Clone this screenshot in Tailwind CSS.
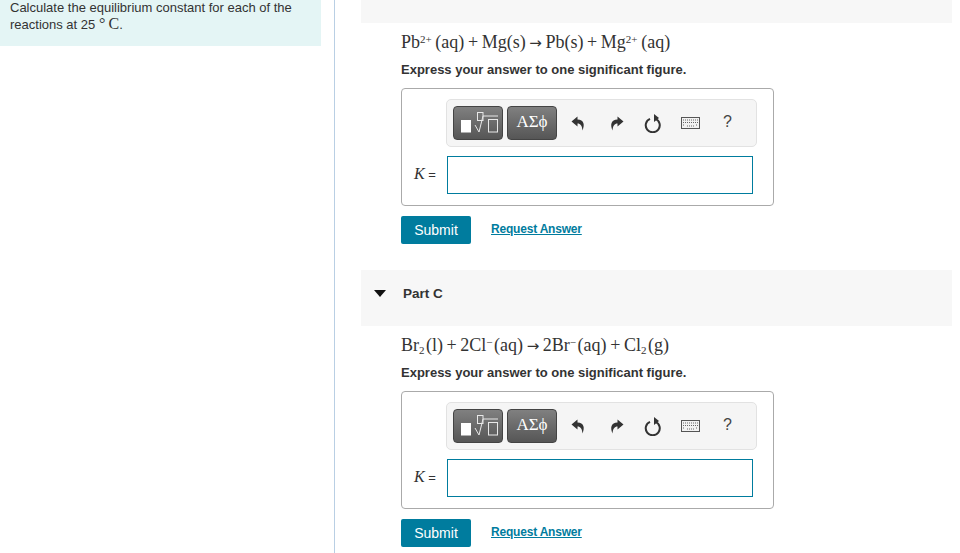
<!DOCTYPE html>
<html lang="en">
<head>
<meta charset="UTF-8">
<title>Part C</title>
<script src="https://cdn.jsdelivr.net/npm/@tailwindcss/browser@4"></script>
</head>
<body class="bg-white font-['Liberation_Sans',Arial,sans-serif] text-[#333] overflow-hidden">
<div class="flex h-[553px] overflow-hidden">
  <div class="w-[335px] shrink-0 border-r border-[#b9cfe4] pr-[13px]">
    <div class="h-[46px] bg-[#e4f5f5] pl-[10px] pr-2 text-[13px] leading-[16px] text-[#333]">
      <p class="w-[290px]">Calculate the equilibrium constant for each of the reactions at 25 <span class="font-['Liberation_Serif',serif] text-[16px] leading-none">°&#8201;C</span>.</p>
    </div>
  </div>
  <div class="w-[591px] ml-[26px] shrink-0">
    <div class="h-[23px] bg-[#f7f7f7]"></div>

    <div class="h-[247px] pl-10">
      <p class="h-[39px] pt-[8px] font-['Liberation_Serif',serif] text-[18px] leading-[22px] text-[#333] whitespace-nowrap">Pb<sup class="text-[11px] leading-none">2+</sup>&#8201;(aq)&#8201;+&#8201;Mg(s)&#8201;<span class="font-['DejaVu_Sans',sans-serif] text-[15px]">→</span>&#8201;Pb(s)&#8201;+&#8201;Mg<sup class="text-[11px] leading-none">2+</sup>&#8201;(aq)</p>
      <p class="h-[26px] text-[13px] leading-[16px] font-bold text-[#333]">Express your answer to one significant figure.</p>
      <div class="w-[373px] h-[118px] border border-[#aaa] rounded-[4px] pt-[10px] pl-[44px]">
        <div class="w-[311px] h-[48px] bg-[#f5f5f5] border border-[#e2e2e2] rounded-[5px] flex items-center pl-[6px]">
          <div class="w-[50px] h-[34px] rounded-[4px] border border-[#444] bg-gradient-to-b from-[#808080] to-[#565656]">
            <svg width="48" height="32" viewBox="0 0 48 32" fill="none" stroke="#e8e8e8" stroke-width="1"><rect x="7" y="13" width="10" height="12.500" fill="#fff" stroke="none" /><rect x="23.500" y="5.500" width="5.500" height="8" /><path d="M21 18l4 7 4-16h15" /><rect x="34.500" y="12.500" width="9" height="12.500" /></svg>
          </div>
          <div class="w-[50px] h-[34px] ml-[4px] rounded-[4px] border border-[#444] bg-gradient-to-b from-[#808080] to-[#565656] flex items-center justify-center font-['Liberation_Serif',serif] text-[17px] text-white"><span class="-mt-[2px]">ΑΣϕ</span></div>
          <svg class="ml-[14px]" width="14" height="15" viewBox="0 0 14 15" fill="#333"><path d="M6.500 0.500L0.500 5.500l6 5V7.500c3 0 4.500 2 5 7 2.500-6 1.500-10.500-5-11z" /></svg>
          <svg class="ml-[25px]" width="14" height="15" viewBox="0 0 14 15" fill="#333"><path d="M7.500 0.500l6 5-6 5V7.500c-3 0-4.500 2-5 7-2.500-6-1.500-10.500 5-11z" /></svg>
          <svg class="ml-[20px]" width="18" height="19" viewBox="0 0 18 19" fill="none" stroke="#333" stroke-width="2"><path d="M6 4.800a7 7 0 1 0 5.500 0" /><path d="M10 0l0 8 5-4z" fill="#333" stroke="none" /></svg>
          <svg class="ml-[19px]" width="19" height="12" viewBox="0 0 19 12" fill="#f2f2f2" stroke="#555" stroke-width="1"><rect x="0.500" y="0.500" width="18" height="11" /><path d="M2 3h15M2 5.500h15M2 8h2M6 9h7M15 8h2" stroke="#666" stroke-dasharray="1 1" /></svg>
          <span class="ml-[23px] -mt-[2px] text-[16px] text-[#444]">?</span>
        </div>
        <div class="flex items-center mt-[9px] -ml-[32px]">
          <span class="w-[33px] -mt-[2px] text-[13px] text-[#333] whitespace-nowrap"><i class="font-['Liberation_Serif',serif] text-[16px]">K</i> =</span>
          <div class="w-[306px] h-[38px] border border-[#007c9e] bg-white"></div>
        </div>
      </div>
      <div class="flex items-center mt-[10px]">
        <button class="w-[70px] h-[28px] bg-[#007c9e] rounded-[2px] text-white text-[14px]">Submit</button>
        <a class="ml-5 -mt-[3px] text-[12px] tracking-[-0.2px] font-bold text-[#007c9e] underline">Request Answer</a>
      </div>
    </div>

    <div class="h-[56px] bg-[#f7f7f7] flex items-start pl-[13px] pt-[15px]">
      <svg class="mt-[5px]" width="12" height="7" viewBox="0 0 12 7" fill="#111"><path d="M0 0h12L6 7z" /></svg>
      <span class="ml-[17px] text-[13.500px] leading-[18px] font-bold text-[#333]">Part C</span>
    </div>

    <div class="pl-10">
      <p class="h-[39px] pt-[8px] font-['Liberation_Serif',serif] text-[18px] leading-[22px] text-[#333] whitespace-nowrap">Br<sub class="text-[11px] leading-none">2</sub>&#8202;(l)&#8201;+&#8201;2Cl<sup class="text-[11px] leading-none">−</sup>&#8202;(aq)&#8201;<span class="font-['DejaVu_Sans',sans-serif] text-[15px]">→</span>&#8201;2Br<sup class="text-[11px] leading-none">−</sup>&#8202;(aq)&#8201;+&#8201;Cl<sub class="text-[11px] leading-none">2</sub>&#8202;(g)</p>
      <p class="h-[26px] text-[13px] leading-[16px] font-bold text-[#333]">Express your answer to one significant figure.</p>
      <div class="w-[373px] h-[118px] border border-[#aaa] rounded-[4px] pt-[10px] pl-[44px]">
        <div class="w-[311px] h-[48px] bg-[#f5f5f5] border border-[#e2e2e2] rounded-[5px] flex items-center pl-[6px]">
          <div class="w-[50px] h-[34px] rounded-[4px] border border-[#444] bg-gradient-to-b from-[#808080] to-[#565656]">
            <svg width="48" height="32" viewBox="0 0 48 32" fill="none" stroke="#e8e8e8" stroke-width="1"><rect x="7" y="13" width="10" height="12.500" fill="#fff" stroke="none" /><rect x="23.500" y="5.500" width="5.500" height="8" /><path d="M21 18l4 7 4-16h15" /><rect x="34.500" y="12.500" width="9" height="12.500" /></svg>
          </div>
          <div class="w-[50px] h-[34px] ml-[4px] rounded-[4px] border border-[#444] bg-gradient-to-b from-[#808080] to-[#565656] flex items-center justify-center font-['Liberation_Serif',serif] text-[17px] text-white"><span class="-mt-[2px]">ΑΣϕ</span></div>
          <svg class="ml-[14px]" width="14" height="15" viewBox="0 0 14 15" fill="#333"><path d="M6.500 0.500L0.500 5.500l6 5V7.500c3 0 4.500 2 5 7 2.500-6 1.500-10.500-5-11z" /></svg>
          <svg class="ml-[25px]" width="14" height="15" viewBox="0 0 14 15" fill="#333"><path d="M7.500 0.500l6 5-6 5V7.500c-3 0-4.500 2-5 7-2.500-6-1.500-10.500 5-11z" /></svg>
          <svg class="ml-[20px]" width="18" height="19" viewBox="0 0 18 19" fill="none" stroke="#333" stroke-width="2"><path d="M6 4.800a7 7 0 1 0 5.500 0" /><path d="M10 0l0 8 5-4z" fill="#333" stroke="none" /></svg>
          <svg class="ml-[19px]" width="19" height="12" viewBox="0 0 19 12" fill="#f2f2f2" stroke="#555" stroke-width="1"><rect x="0.500" y="0.500" width="18" height="11" /><path d="M2 3h15M2 5.500h15M2 8h2M6 9h7M15 8h2" stroke="#666" stroke-dasharray="1 1" /></svg>
          <span class="ml-[23px] -mt-[2px] text-[16px] text-[#444]">?</span>
        </div>
        <div class="flex items-center mt-[9px] -ml-[32px]">
          <span class="w-[33px] -mt-[2px] text-[13px] text-[#333] whitespace-nowrap"><i class="font-['Liberation_Serif',serif] text-[16px]">K</i> =</span>
          <div class="w-[306px] h-[38px] border border-[#007c9e] bg-white"></div>
        </div>
      </div>
      <div class="flex items-center mt-[10px]">
        <button class="w-[70px] h-[28px] bg-[#007c9e] rounded-[2px] text-white text-[14px]">Submit</button>
        <a class="ml-5 -mt-[3px] text-[12px] tracking-[-0.2px] font-bold text-[#007c9e] underline">Request Answer</a>
      </div>
    </div>
  </div>
</div>
</body>
</html>
